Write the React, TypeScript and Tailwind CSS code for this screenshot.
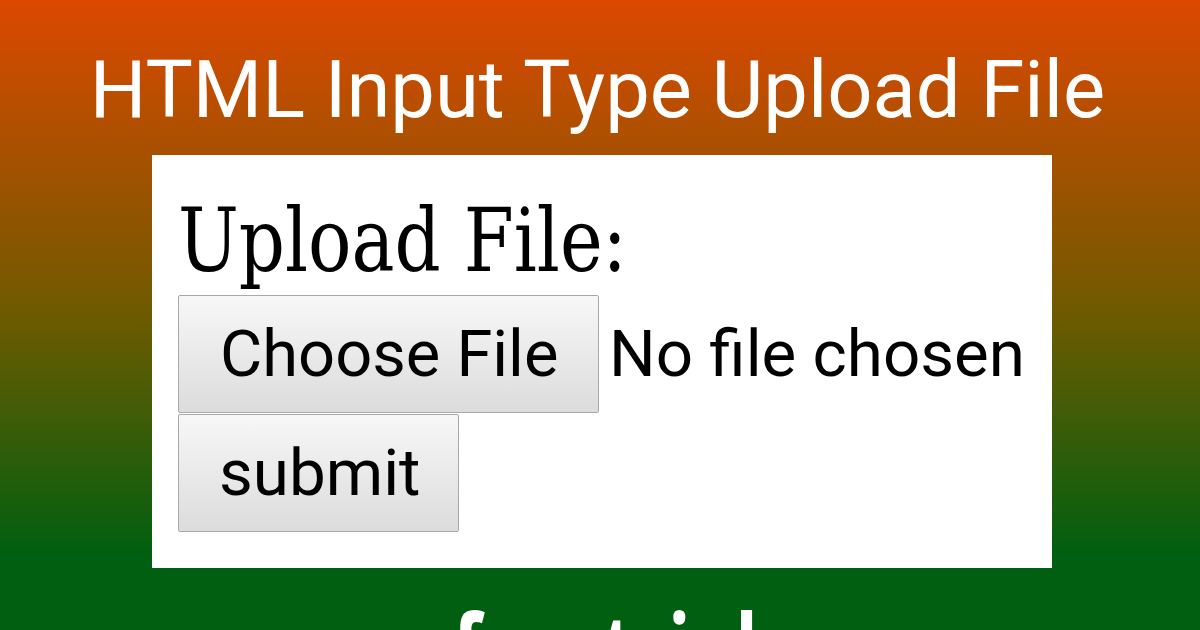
import React from "react";

export default function App() {
  return (
    <div className="w-[1200px] h-[630px] overflow-hidden flex flex-col items-center bg-[linear-gradient(to_bottom,#dd4800_0%,#6e5a00_50%,#005f10_88%,#005f10_100%)]">
      <div className="mr-[5px] pt-[50px] h-[130px] mb-[25px] text-white text-[79.5px] leading-[80px] font-['Roboto',sans-serif] whitespace-nowrap">
        HTML Input Type Upload File
      </div>
      <div className="ml-[4px] w-[900px] h-[413px] shrink-0 bg-white pl-[26px] pt-[42px] flex flex-col items-start">
        <div className="origin-left scale-x-[0.82] text-black text-[88px] leading-[88px] font-['DejaVu_Serif',serif] whitespace-nowrap">
          Upload File:
        </div>
        <div className="mt-[10px] flex items-center">
          <div className="h-[118px] w-[421px] flex items-center pl-[41px] border border-[#a9a9a9] rounded-[2px] bg-[linear-gradient(to_bottom,#f7f7f7,#dcdcdc)] text-black text-[65px] leading-[80px] font-['Roboto',sans-serif] whitespace-nowrap">
            Choose File
          </div>
          <div className="ml-[10px] text-black text-[65.5px] leading-[80px] font-['Roboto',sans-serif] whitespace-nowrap">
            No file chosen
          </div>
        </div>
        <div className="mt-[1px] h-[118px] w-[281px] flex items-center pl-[40px] border border-[#a9a9a9] rounded-[2px] bg-[linear-gradient(to_bottom,#f7f7f7,#dcdcdc)] text-black text-[65.5px] leading-[80px] font-['Roboto',sans-serif] whitespace-nowrap">
          submit
        </div>
      </div>
      <div className="ml-[10px] mt-[30px] scale-x-[0.74] text-white text-[100px] leading-[100px] font-bold font-['Open_Sans',sans-serif] whitespace-nowrap">
        freetrial
      </div>
    </div>
  );
}
